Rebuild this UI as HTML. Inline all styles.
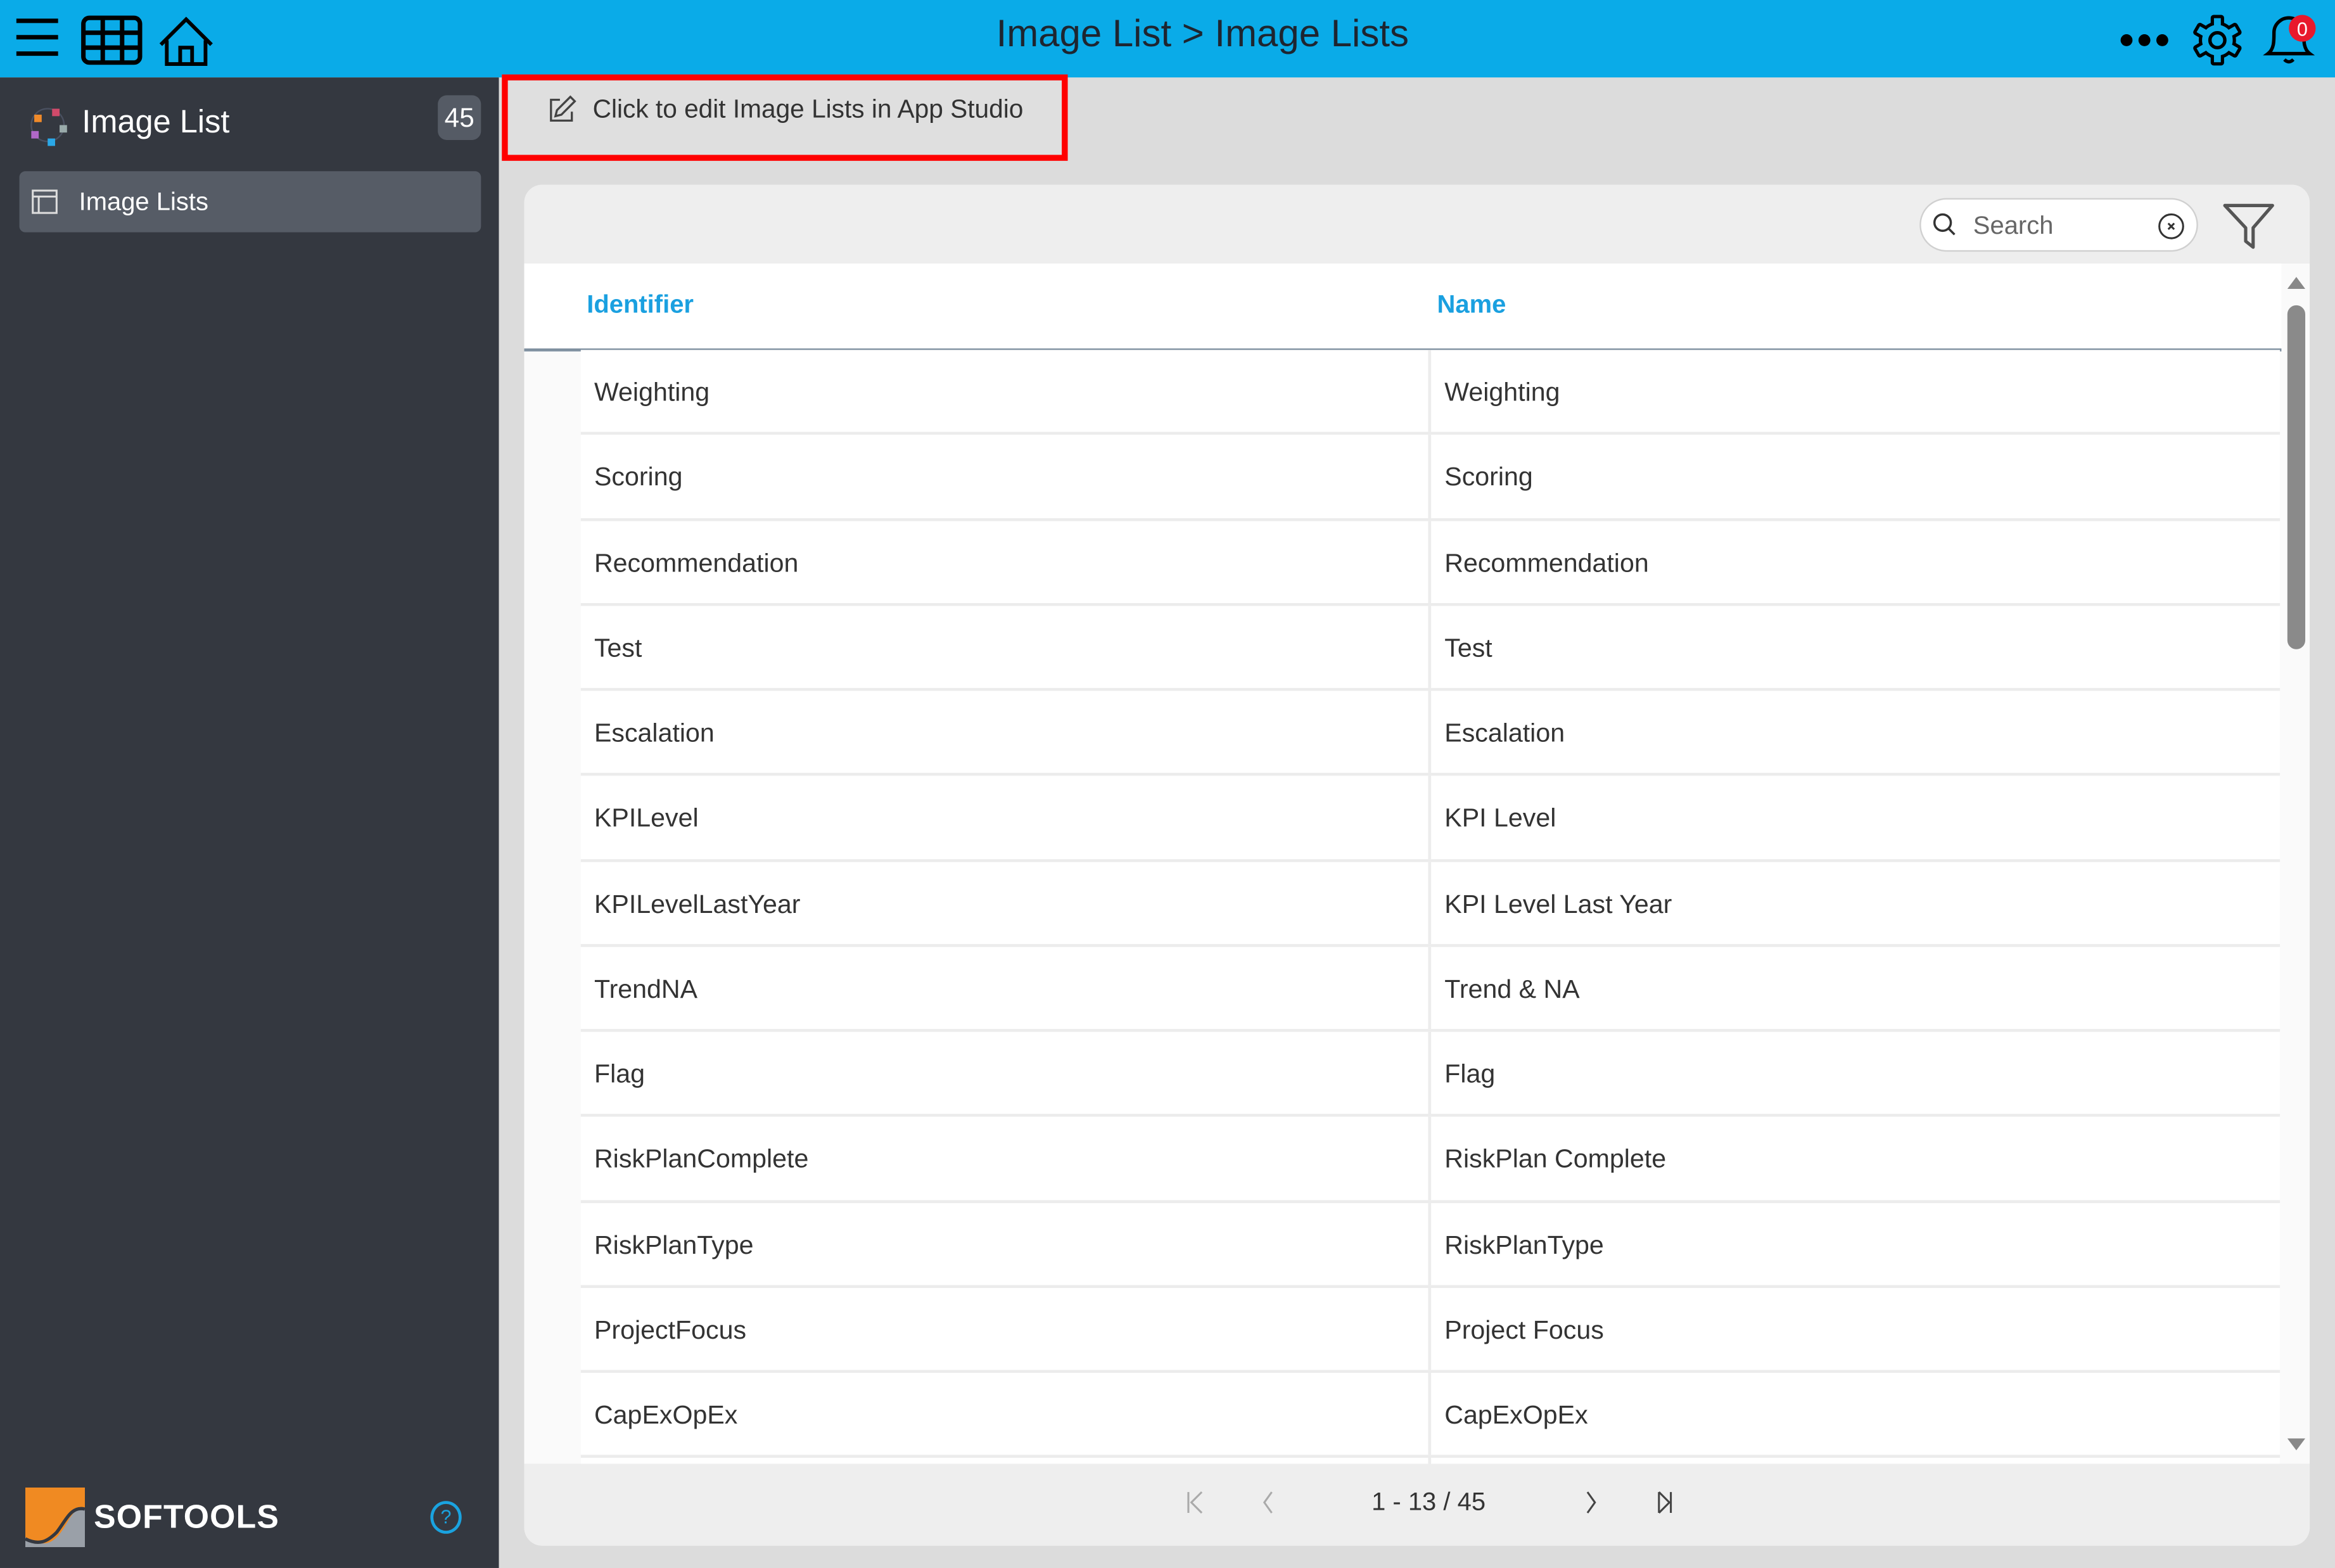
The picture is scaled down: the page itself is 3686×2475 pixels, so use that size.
<!DOCTYPE html>
<html><head><meta charset="utf-8"><style>
*{box-sizing:border-box;margin:0;padding:0}
html,body{width:3686px;height:2475px;overflow:hidden;background:#dcdcdc}
#w{position:absolute;left:0;top:0;width:1568px;height:1053px;transform:scale(2.3508,2.3504);transform-origin:0 0;font-family:"Liberation Sans",sans-serif;background:#dcdcdc;overflow:hidden}
.abs{position:absolute}
#top{left:0;top:0;width:1568px;height:52px;background:#0aabe8}
#title{left:0;width:1615px;top:9px;text-align:center;font-size:25.5px;color:#1e2530}
#side{left:0;top:52px;width:335px;height:1001px;background:#343840}
.row{position:absolute;left:390px;width:1141px;height:57.25px;border-bottom:2px solid #ececec;background:#fff}
.row .d{position:absolute;left:569px;top:0;width:2px;height:100%;background:#ececec}
.row span{position:absolute;top:18px;font-size:17.5px;color:#333}
</style></head><body><div id="w">
<div id="top" class="abs"></div>
<div id="title" class="abs">Image List &gt; Image Lists</div>
<svg class="abs" style="left:8px;top:10px" width="140" height="36" viewBox="0 0 140 36" fill="none" stroke="#000" stroke-width="3">
<path d="M3 4h28M3 15h28M3 26h28"/>
<rect x="48" y="2" width="38" height="30" rx="4"/><path d="M61 2v30M74 2v30M48 12h38M48 22h38"/>
<path d="M100 20l17-17 17 17M104 17v16h26V17M113 33v-11h8v11" stroke-width="2.5"/>
</svg>
<svg class="abs" style="left:1420px;top:6px" width="148" height="42" viewBox="0 0 148 42">
<circle cx="8" cy="21" r="4" fill="#000"/><circle cx="20" cy="21" r="4" fill="#000"/><circle cx="32" cy="21" r="4" fill="#000"/>
<g transform="translate(69 21)">
<g fill="#000"><circle r="12.5"/><rect x="-4.5" y="-17" width="9" height="34" rx="2"/><rect x="-4.5" y="-17" width="9" height="34" rx="2" transform="rotate(60)"/><rect x="-4.5" y="-17" width="9" height="34" rx="2" transform="rotate(120)"/></g>
<g fill="#0aabe8"><circle r="10.3"/><rect x="-2.3" y="-14.8" width="4.6" height="29.6" transform="rotate(0)"/><rect x="-2.3" y="-14.8" width="4.6" height="29.6" transform="rotate(60)"/><rect x="-2.3" y="-14.8" width="4.6" height="29.6" transform="rotate(120)"/></g>
<circle r="5" fill="none" stroke="#000" stroke-width="2.3"/></g>
<g fill="none" stroke="#000" stroke-width="2.3">
<path d="M103 30c4-3 4-8 4-14 0-6 5-10 10-10s10 4 10 10c0 6 0 11 4 14z"/><path d="M114 34q3 3 6 0"/></g>
<circle cx="126" cy="13" r="9" fill="#e8192c"/><text x="126" y="18" font-size="13" fill="#fff" text-anchor="middle" font-family="Liberation Sans">0</text>
</svg>
<div id="side" class="abs"></div>
<svg class="abs" style="left:16px;top:68px" width="32" height="32" viewBox="0 0 32 32"><circle cx="16" cy="16" r="11" fill="none" stroke="#4a5060" stroke-width="1"/>
<rect x="7" y="9" width="5" height="5" fill="#f08a2a"/><rect x="19" y="5" width="5" height="5" fill="#d04a6a"/><rect x="24" y="16" width="5" height="5" fill="#9aa"/><rect x="5" y="20" width="5" height="5" fill="#b068c8"/><rect x="16" y="25" width="5" height="5" fill="#2aa8e8"/></svg>
<div class="abs" style="left:55px;top:70px;font-size:21.5px;color:#fff">Image List</div>
<div class="abs" style="left:294px;top:64px;width:29px;height:30px;border-radius:6px;background:#555b65;color:#fff;font-size:18px;text-align:center;line-height:30px">45</div>
<div class="abs" style="left:13px;top:115px;width:310px;height:41px;border-radius:4px;background:#565c66"></div>
<svg class="abs" style="left:21px;top:127px" width="18" height="17" viewBox="0 0 18 17" fill="none" stroke="#ddd" stroke-width="1.3"><rect x="1" y="1" width="16" height="15"/><path d="M1 5h16M5 5v11"/></svg>
<div class="abs" style="left:53px;top:126px;font-size:17px;color:#fff">Image Lists</div>
<svg class="abs" style="left:17px;top:999px" width="40" height="40" viewBox="0 0 36 36"><rect x="0" y="0" width="36" height="36" fill="#9aa0a8"/><path d="M0 0h36v13c-8-2-10 10-17 17-6 6-12 4-19 0z" fill="#f08a22"/><path d="M0 31c8 4 13 2 19-4 6-8 9-16 17-14" fill="none" stroke="#343840" stroke-width="2"/></svg>
<div class="abs" style="left:63px;top:1006px;font-size:22px;font-weight:bold;color:#fff;letter-spacing:0.5px">SOFTOOLS</div>
<div class="abs" style="left:289px;top:1008px;width:21px;height:22px;border:2px solid #1aa3e0;border-radius:50%;color:#1aa3e0;font-size:13px;text-align:center;line-height:18px">?</div>
<div class="abs" style="left:337px;top:50px;width:380px;height:58px;border:4.5px solid #ff0000;background:#dfdfdf"></div>
<svg class="abs" style="left:367px;top:64px" width="20" height="20" viewBox="0 0 20 20" fill="none" stroke="#444" stroke-width="1.4"><path d="M9 3H3v14h14v-6"/><path d="M16 1l3 3-9 9-4 1 1-4z"/></svg>
<div class="abs" style="left:398px;top:63px;font-size:17.3px;color:#333">Click to edit Image Lists in App Studio</div>
<div class="abs" style="left:352px;top:124px;width:1199px;height:914px;border-radius:12px;background:#eeeeee;overflow:hidden">
 <div class="abs" style="left:0;top:53px;width:1199px;height:806px;background:#fafafa"></div>
 <div class="abs" style="left:0;top:53px;width:1180px;height:57px;background:#fff"></div>
 <div class="abs" style="left:0;top:110px;width:1180px;height:2px;background:#7f90a0"></div>
</div>
<div class="abs" style="left:394px;top:195px;font-size:17px;color:#1aa0e0;font-weight:bold">Identifier</div>
<div class="abs" style="left:965px;top:195px;font-size:17px;color:#1aa0e0;font-weight:bold">Name</div>
<div class="abs" style="left:1289px;top:133px;width:187px;height:36px;border-radius:18px;background:#fff;border:1px solid #d0d0d0"></div>
<svg class="abs" style="left:1297px;top:142px" width="18" height="18" viewBox="0 0 18 18" fill="none" stroke="#333" stroke-width="1.5"><circle cx="7.5" cy="7.5" r="5.5"/><path d="M11.5 11.5l4 4"/></svg>
<div class="abs" style="left:1325px;top:142px;font-size:17px;color:#666">Search</div>
<svg class="abs" style="left:1448px;top:142px" width="20" height="20" viewBox="0 0 20 20" fill="none" stroke="#333" stroke-width="1.3"><circle cx="10" cy="10" r="8"/><path d="M8 8l4 4M12 8l-4 4"/></svg>
<svg class="abs" style="left:1492px;top:135px" width="36" height="34" viewBox="0 0 36 34" fill="none" stroke="#555" stroke-width="2.2" stroke-linejoin="round"><path d="M2 3h32L21 18v13l-5-4V18z"/></svg>
<div class="abs" style="left:1536px;top:205px;width:12px;height:231px;border-radius:6px;background:#8a8a8a"></div>
<div class="abs" style="left:1536px;top:186px;width:0;height:0;border-left:6px solid transparent;border-right:6px solid transparent;border-bottom:8px solid #888"></div>
<div class="abs" style="left:1536px;top:966px;width:0;height:0;border-left:6px solid transparent;border-right:6px solid transparent;border-top:8px solid #888"></div>
<div class="row" style="top:235px"><div class="d"></div><span style="left:9px">Weighting</span><span style="left:580px">Weighting</span></div>
<div class="row" style="top:292.25px"><div class="d"></div><span style="left:9px">Scoring</span><span style="left:580px">Scoring</span></div>
<div class="row" style="top:349.5px"><div class="d"></div><span style="left:9px">Recommendation</span><span style="left:580px">Recommendation</span></div>
<div class="row" style="top:406.75px"><div class="d"></div><span style="left:9px">Test</span><span style="left:580px">Test</span></div>
<div class="row" style="top:464px"><div class="d"></div><span style="left:9px">Escalation</span><span style="left:580px">Escalation</span></div>
<div class="row" style="top:521.25px"><div class="d"></div><span style="left:9px">KPILevel</span><span style="left:580px">KPI Level</span></div>
<div class="row" style="top:578.5px"><div class="d"></div><span style="left:9px">KPILevelLastYear</span><span style="left:580px">KPI Level Last Year</span></div>
<div class="row" style="top:635.75px"><div class="d"></div><span style="left:9px">TrendNA</span><span style="left:580px">Trend &amp; NA</span></div>
<div class="row" style="top:693px"><div class="d"></div><span style="left:9px">Flag</span><span style="left:580px">Flag</span></div>
<div class="row" style="top:750.25px"><div class="d"></div><span style="left:9px">RiskPlanComplete</span><span style="left:580px">RiskPlan Complete</span></div>
<div class="row" style="top:807.5px"><div class="d"></div><span style="left:9px">RiskPlanType</span><span style="left:580px">RiskPlanType</span></div>
<div class="row" style="top:864.75px"><div class="d"></div><span style="left:9px">ProjectFocus</span><span style="left:580px">Project Focus</span></div>
<div class="row" style="top:922px"><div class="d"></div><span style="left:9px">CapExOpEx</span><span style="left:580px">CapExOpEx</span></div>
<div class="row" style="top:979.25px;height:4px;border:0"><div class="d"></div></div>
<div class="abs" style="left:352px;top:983px;width:1199px;height:55px;background:#eeeeee;border-radius:0 0 12px 12px"></div>
<svg class="abs" style="left:794px;top:1000px" width="340" height="18" viewBox="0 0 340 18" fill="none" stroke-width="1.3">
<path d="M4 2v14M13 2l-7 7 7 7" stroke="#aaa"/><path d="M60 2l-5 7 5 7" stroke="#aaa"/>
<path d="M272 2l5 7-5 7" stroke="#444"/><path d="M320 2v14M320 2l7 7-7 7M328 2v14" stroke="#444"/></svg>
<div class="abs" style="left:921px;top:999px;font-size:17px;color:#333">1 - 13 / 45</div>
</div></body></html>
